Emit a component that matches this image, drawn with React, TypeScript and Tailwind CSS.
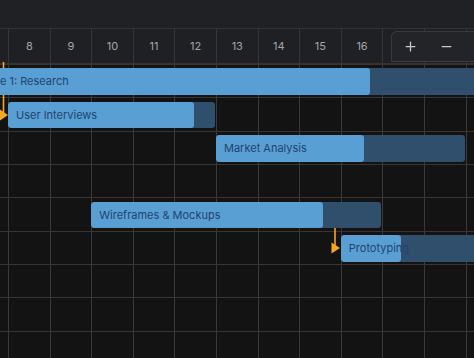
import React from 'react';
import { Plus, Minus } from 'lucide-react';

const COL = 41.6;
const ORIGIN = 8; // x of day 8's left edge
const days = [7, 8, 9, 10, 11, 12, 13, 14, 15, 16, 17, 18, 19];

type Task = { label: string; row: number; start: number; span: number; progress: number };

const tasks: Task[] = [
  { label: 'Phase 1: Research', row: 0, start: 7, span: 13, progress: 0.748 },
  { label: 'User Interviews', row: 1, start: 8, span: 5, progress: 0.9 },
  { label: 'Market Analysis', row: 2, start: 13, span: 6, progress: 0.595 },
  { label: 'Wireframes & Mockups', row: 4, start: 10, span: 7, progress: 0.8 },
  { label: 'Prototyping', row: 5, start: 16, span: 5, progress: 0.29 },
];

const rows = Array.from({ length: 9 }, (_, i) => i);

const App: React.FC = () => {
  return (
    <div className="relative w-[474px] h-[358px] overflow-hidden bg-[#131313] font-['Inter','Noto_Sans',sans-serif]">
      {/* top toolbar strip */}
      <div className="h-[29px] bg-[#202124] border-b border-[#313236]" />

      {/* day header */}
      <div className="h-[35px] bg-[#1f2023] border-b border-[#3b302c] flex -ml-[33.6px]">
        {days.map((d) => (
          <div
            key={d}
            className="w-[41.6px] shrink-0 border-l border-[#35363a] flex items-center justify-center text-[11px] text-[#a3a5a8]"
          >
            {d >= 8 && d <= 16 ? d : null}
          </div>
        ))}
      </div>

      {/* body grid */}
      <div className="relative">
        {rows.map((r) => (
          <div key={r} className="relative h-[33.35px] border-t border-[#3b3433] flex -ml-[33.6px]">
            {days.map((d) => (
              <div key={d} className="w-[41.6px] shrink-0 border-l border-[#3a3a3a]" />
            ))}
          </div>
        ))}

        {/* dependency arrows */}
        <svg className="absolute left-0 -top-[64px] w-[474px] h-[358px] pointer-events-none" viewBox="0 0 474 358">
          <g stroke="#f5a623" strokeWidth="1.6" fill="#f5a623">
            <line x1="3.5" y1="62" x2="3.5" y2="114" />
            <polygon points="0,109.5 8,115 0,120.5" stroke="none" />
            <line x1="335" y1="228" x2="335" y2="246" />
            <polygon points="331.5,242.5 340,248 331.5,253.5" stroke="none" />
          </g>
        </svg>

        {/* bars */}
        {tasks.map((t) => {
          const left = ORIGIN + (t.start - 8) * COL;
          const width = t.span * COL - 1;
          return (
            <div
              key={t.label}
              className="absolute h-[26.7px] rounded-[3px] bg-[#2f4f6d] overflow-hidden"
              style={{ left, width, top: t.row * 33.35 + 4.3 }}
            >
              <div
                className="absolute left-0 top-0 h-full rounded-[3px] bg-[#5a9fd4]"
                style={{ width: width * t.progress }}
              />
              <span className="relative flex h-full items-center pl-2 text-[11px] text-[#1f4470] whitespace-nowrap">
                {t.label}
              </span>
            </div>
          );
        })}
      </div>

      {/* zoom controls */}
      <div className="absolute left-[391px] top-[31px] right-0 h-[31px] flex items-center bg-[#232428] border border-r-0 border-[#393a3e] rounded-tl-md">
        <button className="w-[36px] flex items-center justify-center text-[#c9cacc]">
          <Plus size={15} strokeWidth={2} />
        </button>
        <button className="w-[36px] flex items-center justify-center text-[#c9cacc]">
          <Minus size={15} strokeWidth={2} />
        </button>
      </div>
    </div>
  );
};

export default App;
